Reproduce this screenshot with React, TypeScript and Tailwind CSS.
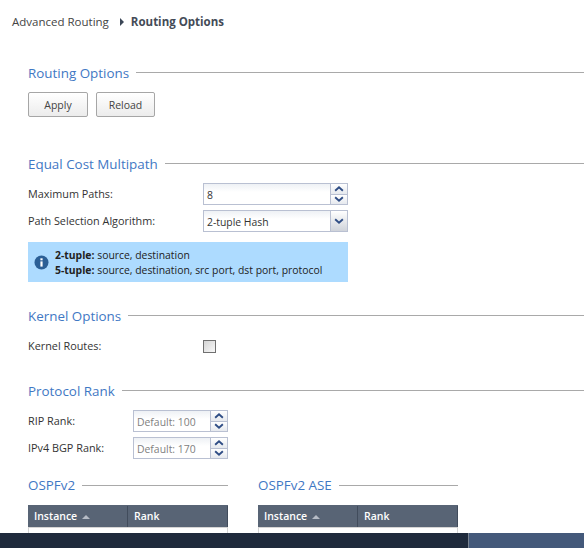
const font = "font-['Open_Sans',sans-serif]";

function Heading({ title }: { title: string }) {
  return (
    <div className="flex h-5 items-center gap-[7px]">
      <h2 className="text-[13.4px] leading-5 text-[#3f78c4]">{title}</h2>
      <div className="mb-[2px] h-px flex-1 bg-[#a9a9a9]" />
    </div>
  );
}

function Arrow({ down }: { down?: boolean }) {
  return (
    <svg width="10" height="6" viewBox="0 0 11 7" className={down ? "rotate-180" : ""}>
      <path d="M1 5.5 L5.5 1.5 L10 5.5" fill="none" stroke="#2f4d85" strokeWidth="2.2" />
    </svg>
  );
}

function Spinner({ value, placeholder, width }: { value: string; placeholder?: boolean; width: string }) {
  return (
    <div className={`flex h-[22px] border border-[#b9c0d2] bg-gradient-to-b from-[#eef1f5] to-white to-40% ${width}`}>
      <div className={`flex flex-1 items-center px-[3px] pt-[3px] text-[10.4px] ${placeholder ? "text-[#808080]" : "text-[#333333]"}`}>
        {value}
      </div>
      <div className="flex w-[17px] flex-col border-l border-[#b9c0d2]">
        <div className="flex flex-1 items-center justify-center bg-gradient-to-b from-white to-[#e6e9ee]">
          <Arrow />
        </div>
        <div className="flex flex-1 items-center justify-center border-t border-[#b9c0d2] bg-gradient-to-b from-white to-[#e6e9ee]">
          <Arrow down />
        </div>
      </div>
    </div>
  );
}

function RankTable({ title }: { title: string }) {
  return (
    <div className="w-[200px]">
      <div className="flex h-5 items-center gap-[7px]">
        <h2 className="text-[13.4px] leading-5 text-[#3f78c4]">{title}</h2>
        <div className="h-px flex-1 bg-[#a9a9a9]" />
      </div>
      <div className="mt-[10px] flex h-[22px] bg-[#586475] pt-px text-[10.5px] font-semibold text-white">
        <div className="flex w-[100px] items-center gap-[5px] border-r border-[#414c5c] pl-[6px]">
          Instance
          <span className="h-0 w-0 border-x-[4px] border-b-[4px] border-x-transparent border-b-[#b6bcc6]" />
        </div>
        <div className="flex flex-1 items-center border-r border-[#414c5c] pl-[6px]">Rank</div>
      </div>
      <div className="h-[10px] border border-[#d5d5d5] bg-white" />
    </div>
  );
}

export default function App() {
  return (
    <div className={`flex h-[548px] w-[584px] flex-col overflow-hidden bg-white text-[#333333] ${font}`}>
      <div className="flex-1 overflow-hidden">
        {/* Breadcrumb */}
        <div className="flex items-center pl-3 pt-[14px] text-[11.5px] leading-4">
          <span className="text-[#444444]">Advanced Routing</span>
          <span className="ml-[11px] mr-[7px] h-0 w-0 border-y-[4px] border-l-[4px] border-y-transparent border-l-[#3b4656]" />
          <span className="font-bold text-[#444b57]">Routing Options</span>
        </div>

        <div className="pl-7">
          <section className="pt-[33px]">
            <Heading title="Routing Options" />
            <div className="mt-[9px] flex gap-2">
              <button className="h-[25px] w-[60px] rounded-[2px] border border-[#a6a6a6] bg-gradient-to-b from-white to-[#ececec] pt-[2px] text-[10.5px] text-[#444444]">
                Apply
              </button>
              <button className="h-[25px] w-[59px] rounded-[2px] border border-[#a6a6a6] bg-gradient-to-b from-white to-[#ececec] pt-[2px] text-[10.5px] text-[#444444]">
                Reload
              </button>
            </div>
          </section>

          <section className="pt-[37px]">
            <Heading title="Equal Cost Multipath" />
            <div className="mt-[9px] flex items-center">
              <label className="w-[175px] text-[10.85px]">Maximum Paths:</label>
              <Spinner value="8" width="w-[145px]" />
            </div>
            <div className="mt-[5px] flex items-center">
              <label className="w-[175px] text-[10.85px]">Path Selection Algorithm:</label>
              <div className="flex h-[22px] w-[145px] border border-[#b9c0d2] bg-gradient-to-b from-[#eef1f5] to-white to-40%">
                <div className="flex flex-1 items-center px-[3px] pt-[3px] text-[10.4px]">2-tuple Hash</div>
                <div className="flex w-[17px] items-center justify-center border-l border-[#b9c0d2] bg-gradient-to-b from-white to-[#cfd3da]">
                  <Arrow down />
                </div>
              </div>
            </div>
            <div className="mt-[10px] flex h-10 w-[320px] items-center bg-[#addbff] pl-[6px] pt-[2px] text-[10.4px] leading-[15px] text-[#222222]">
              <svg width="15" height="15" viewBox="0 0 15 15" className="mb-[2px] mr-[6px] shrink-0">
                <circle cx="7.5" cy="7.5" r="7" fill="#2b5f96" />
                <rect x="6.4" y="6.4" width="2.2" height="5.2" fill="#ffffff" />
                <rect x="6.4" y="3.3" width="2.2" height="2" fill="#ffffff" />
              </svg>
              <div>
                <div><b>2-tuple:</b> source, destination</div>
                <div><b>5-tuple:</b> source, destination, src port, dst port, protocol</div>
              </div>
            </div>
          </section>

          <section className="pt-6">
            <Heading title="Kernel Options" />
            <div className="mt-[11px] flex h-[18px] items-center">
              <label className="w-[175px] text-[10.85px]">Kernel Routes:</label>
              <span className="h-[13px] w-[13px] border border-[#707070] bg-gradient-to-br from-[#d4d4d4] to-[#f8f8f8]" />
            </div>
          </section>

          <section className="pt-[26px]">
            <Heading title="Protocol Rank" />
            <div className="mt-[9px] flex items-center">
              <label className="w-[105px] pt-px text-[10.85px]">RIP Rank:</label>
              <Spinner value="Default: 100" placeholder width="w-[95px]" />
            </div>
            <div className="mt-[5px] flex items-center">
              <label className="w-[105px] pt-px text-[10.85px]">IPv4 BGP Rank:</label>
              <Spinner value="Default: 170" placeholder width="w-[95px]" />
            </div>
          </section>

          <section className="flex gap-[30px] pt-4">
            <RankTable title="OSPFv2" />
            <RankTable title="OSPFv2 ASE" />
          </section>
        </div>
      </div>

      {/* Footer bar */}
      <div className="flex h-[15px] shrink-0">
        <div className="w-[469px] border-r border-[#7a8492] bg-[#1f2a3c]" />
        <div className="flex-1 bg-[#44597a]" />
      </div>
    </div>
  );
}
